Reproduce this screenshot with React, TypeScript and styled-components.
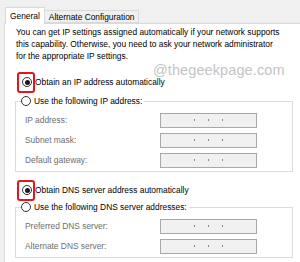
import React from 'react';
import styled, { createGlobalStyle } from 'styled-components';

const GlobalStyle = createGlobalStyle`
  html, body {
    margin: 0;
    padding: 0;
    background: #f0f0f0;
  }
  body {
    width: 300px;
    height: 262px;
    overflow: hidden;
    font-family: 'Liberation Sans', Arial, sans-serif;
    font-size: 8.4px;
    color: #000;
  }
`;

const Dialog = styled.div`
  width: 300px;
  height: 262px;
  position: relative;
  box-sizing: border-box;
  padding-left: 4px;
  display: flex;
  flex-direction: column;
`;

const TabStrip = styled.div`
  display: flex;
  align-items: flex-end;
  height: 23px;
  padding-left: 1px;
  box-sizing: border-box;
`;

const Tab = styled.div<{ $active?: boolean }>`
  box-sizing: border-box;
  display: flex;
  align-items: center;
  padding: 0 4px;
  height: ${({ $active }) => ($active ? '17px' : '13px')};
  margin-bottom: ${({ $active }) => ($active ? '-1px' : '0')};
  background: ${({ $active }) => ($active ? '#fff' : '#f0f0f0')};
  border: 1px solid #d9d9d9;
  border-bottom: ${({ $active }) => ($active ? 'none' : '1px solid #d9d9d9')};
  border-left: ${({ $active }) => ($active ? '1px solid #d9d9d9' : 'none')};
  position: relative;
  z-index: ${({ $active }) => ($active ? 1 : 0)};
`;

const Panel = styled.div`
  flex: 1;
  background: #fff;
  border: 1px solid #d9d9d9;
  border-right: none;
  border-bottom: none;
  padding: 2px 0 0 10px;
  box-sizing: border-box;
`;

const Intro = styled.p`
  margin: 0;
  padding-left: 1px;
  line-height: 12px;
  white-space: pre-line;
`;

const Watermark = styled.div`
  position: absolute;
  left: 153px;
  top: 62px;
  font-size: 14.5px;
  color: #c4c4c4;
  letter-spacing: 0.1px;
`;

const OptionRow = styled.label<{ $top: number }>`
  display: flex;
  align-items: center;
  gap: 3px;
  height: 12px;
  margin-top: ${({ $top }) => $top}px;
  padding-left: 7px;
`;

const Radio = styled.span<{ $checked?: boolean; $marked?: boolean }>`
  position: relative;
  flex: none;
  width: 10px;
  height: 10px;
  box-sizing: border-box;
  border-radius: 50%;
  border: 1px solid #333;
  background: #fff;
  display: flex;
  align-items: center;
  justify-content: center;

  &::after {
    content: '';
    display: ${({ $checked }) => ($checked ? 'block' : 'none')};
    width: 5px;
    height: 5px;
    border-radius: 50%;
    background: #1a1a1a;
  }

  &::before {
    content: '';
    display: ${({ $marked }) => ($marked ? 'block' : 'none')};
    position: absolute;
    left: -6px;
    top: -6px;
    width: 18px;
    height: 21px;
    box-sizing: border-box;
    border: 2px solid #e8141b;
    border-radius: 3px;
  }
`;

const Group = styled.fieldset<{ $top: number }>`
  margin: ${({ $top }) => $top}px 0 0 0;
  width: 278px;
  box-sizing: border-box;
  border: 1px solid #dcdcdc;
  padding: 3px 0 1px 9px;
  min-inline-size: 0;
`;

const Legend = styled.legend`
  padding: 0 2px 0 0;
  margin-left: -4px;
  height: 12px;
  display: flex;
  align-items: center;
  gap: 3px;
`;

const FieldRow = styled.div`
  display: flex;
  align-items: center;
  height: 20px;
`;

const FieldLabel = styled.span`
  width: 135px;
  color: #6d6d6d;
`;

const IpBox = styled.div`
  width: 97px;
  height: 15px;
  box-sizing: border-box;
  border: 1px solid #a8a8a8;
  background: #f0f0f0;
  display: flex;
  justify-content: space-evenly;
  align-items: center;
  padding: 0 20px;
`;

const Dot = styled.span`
  width: 1.5px;
  height: 1.5px;
  background: #8a8a8a;
`;

const IpField = ({ label }: { label: string }) => (
  <FieldRow>
    <FieldLabel>{label}</FieldLabel>
    <IpBox>
      <Dot />
      <Dot />
      <Dot />
    </IpBox>
  </FieldRow>
);

export default function App() {
  return (
    <>
      <GlobalStyle />
      <Dialog>
        <TabStrip>
          <Tab $active>General</Tab>
          <Tab>Alternate Configuration</Tab>
        </TabStrip>
        <Panel>
          <Intro>
            {'You can get IP settings assigned automatically if your network supports\n' +
              'this capability. Otherwise, you need to ask your network administrator\n' +
              'for the appropriate IP settings.'}
          </Intro>

          <OptionRow $top={14}>
            <Radio $checked $marked />
            <span>Obtain an IP address automatically</span>
          </OptionRow>

          <Group $top={7}>
            <Legend>
              <Radio />
              <span>Use the following IP address:</span>
            </Legend>
            <IpField label="IP address:" />
            <IpField label="Subnet mask:" />
            <IpField label="Default gateway:" />
          </Group>

          <OptionRow $top={12}>
            <Radio $checked $marked />
            <span>Obtain DNS server address automatically</span>
          </OptionRow>

          <Group $top={5}>
            <Legend>
              <Radio />
              <span>Use the following DNS server addresses:</span>
            </Legend>
            <IpField label="Preferred DNS server:" />
            <IpField label="Alternate DNS server:" />
          </Group>
        </Panel>
        <Watermark>@thegeekpage.com</Watermark>
      </Dialog>
    </>
  );
}
